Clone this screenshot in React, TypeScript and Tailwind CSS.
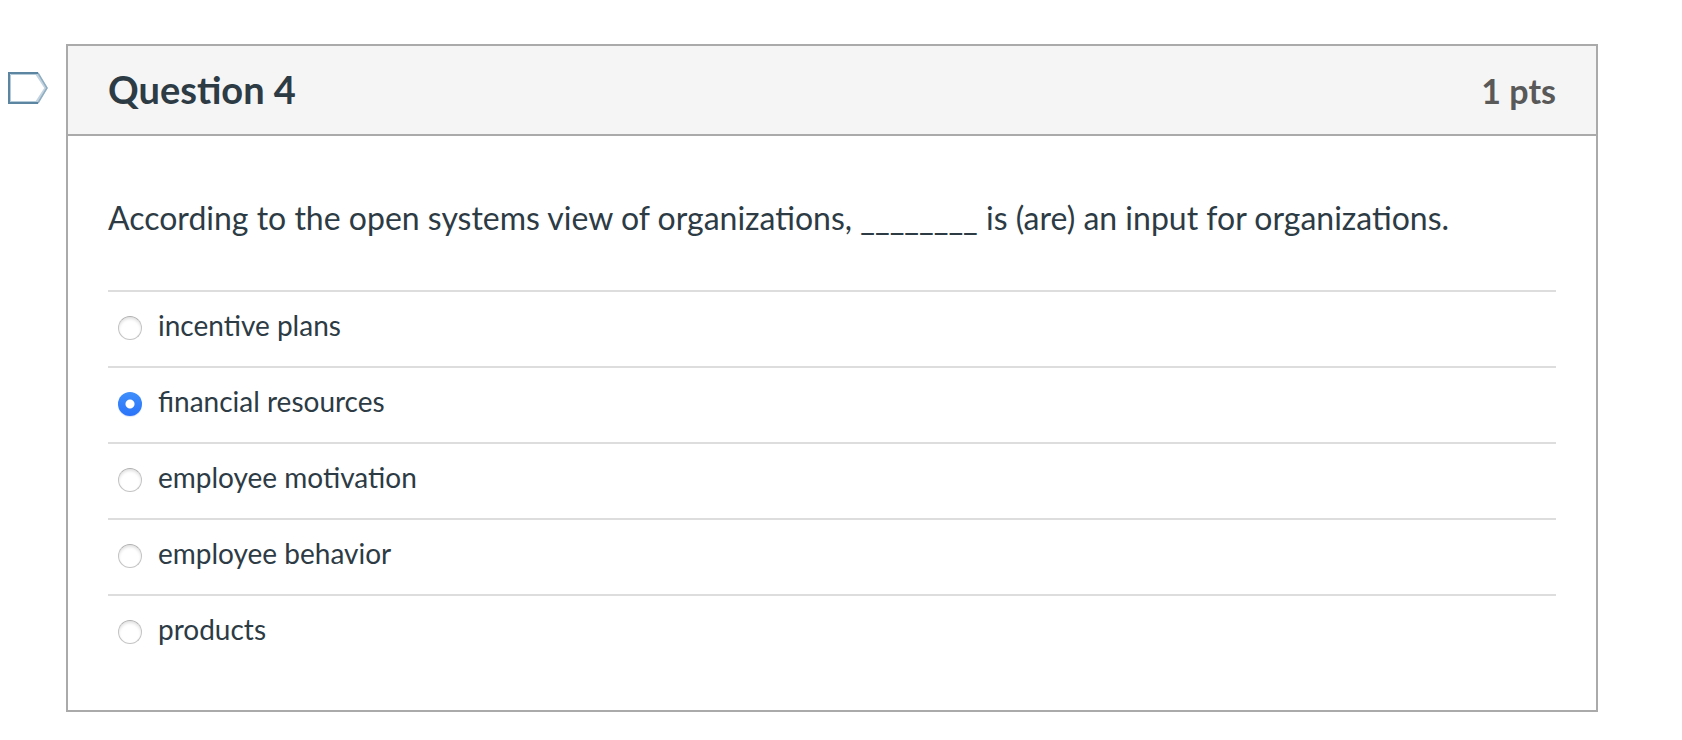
import React, { FC, useState } from 'react'

type Answer = {
    id: string;
    text: string;
};

const answers: Answer[] = [
    { id: 'answer_1', text: 'incentive plans' },
    { id: 'answer_2', text: 'financial resources' },
    { id: 'answer_3', text: 'employee motivation' },
    { id: 'answer_4', text: 'employee behavior' },
    { id: 'answer_5', text: 'products' },
];

const FlagIcon: FC = () => (
    <svg width="40" height="32" viewBox="0 0 40 32" fill="none">
        <path d="M28.5 1.5L38 16L28.5 30.5" stroke="#c3d3df" strokeWidth="3" />
        <path d="M30 1L39 16L30 31" stroke="#8fadc1" strokeWidth="1.5" />
        <path d="M2.5 29.5V2.5H29M2 29.5H29" stroke="#b4cad8" />
        <path d="M30 1H1V31H30" stroke="#5b85a0" strokeWidth="2" />
    </svg>
);

const App: FC = () => {
    const [selected, setSelected] = useState<string>('answer_2');
    const [flagged, setFlagged] = useState<boolean>(false);

    return (
        <main className="flex items-start pt-11 pl-2 pr-[84px] font-[Lato,sans-serif] text-[#2d3b45]">
            <button
                type="button"
                aria-label="Flag question"
                aria-pressed={flagged}
                onClick={() => setFlagged(!flagged)}
                className="mt-7 mr-[18px] shrink-0 cursor-pointer"
            >
                <FlagIcon />
            </button>

            <section className="flex-1 border-2 border-[#aaaaaa]">
                <header className="flex items-baseline justify-between border-b-2 border-[#aaaaaa] bg-[#f5f5f5] px-10 pt-5 pb-[22px]">
                    <h2 className="text-[38px] leading-[46px] font-bold">Question 4</h2>
                    <span className="text-[34px] leading-[40px] font-bold text-[#595959]">1 pts</span>
                </header>

                <div className="px-10 pt-[58px] pb-10">
                    <p id="question_text" className="mb-12 text-[32px] leading-[48px]">
                        According to the open systems view of organizations, ________ is (are) an input for organizations.
                    </p>

                    <div role="radiogroup" aria-labelledby="question_text">
                        {answers.map((answer) => (
                            <div key={answer.id} className="border-t-2 border-[#dddddd] pt-[13px] pb-[21px] pl-[10px]">
                                <label htmlFor={answer.id} className="flex items-start gap-4 text-[28px] leading-[40px]">
                                    <input
                                        type="radio"
                                        name="question_4"
                                        id={answer.id}
                                        checked={selected === answer.id}
                                        onChange={() => setSelected(answer.id)}
                                        className="mt-[11px] size-6 shrink-0 appearance-none rounded-full border border-[#c4c4c4] border-t-[#b0b0b0] bg-white shadow-[inset_0_2px_3px_#e2e2e2] checked:border-0 checked:bg-[radial-gradient(circle,#fff_4px,transparent_5px),linear-gradient(#3f8ffb,#2a73fa)] checked:shadow-[0_1px_1px_#d8e4fa]"
                                    />
                                    {answer.text}
                                </label>
                            </div>
                        ))}
                    </div>
                </div>
            </section>
        </main>
    )
}

export default App
